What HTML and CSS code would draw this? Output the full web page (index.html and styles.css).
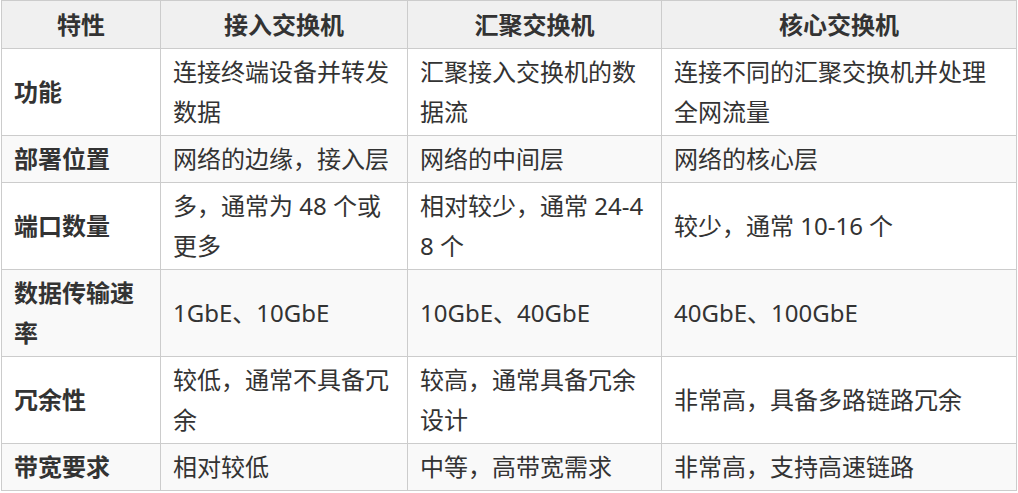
FILE: index.html
```html
<!DOCTYPE html>
<html lang="zh-CN">
<head>
<meta charset="utf-8">
<title>交换机对比</title>
<link rel="stylesheet" href="styles.css">
</head>
<body>
<table class="cmp">
  <colgroup>
    <col class="c1"><col class="c2"><col class="c3"><col class="c4">
  </colgroup>
  <thead>
    <tr><th>特性</th><th>接入交换机</th><th>汇聚交换机</th><th>核心交换机</th></tr>
  </thead>
  <tbody>
    <tr><td class="k">功能</td><td>连接终端设备并转发数据</td><td>汇聚接入交换机的数据流</td><td>连接不同的汇聚交换机并处理全网流量</td></tr>
    <tr><td class="k">部署位置</td><td>网络的边缘，接入层</td><td>网络的中间层</td><td>网络的核心层</td></tr>
    <tr><td class="k">端口数量</td><td>多，通常为 48 个或更多</td><td>相对较少，通常 24-48 个</td><td>较少，通常 10-16 个</td></tr>
    <tr><td class="k">数据传输速率</td><td>1GbE、10GbE</td><td>10GbE、40GbE</td><td>40GbE、100GbE</td></tr>
    <tr><td class="k">冗余性</td><td>较低，通常不具备冗余</td><td>较高，通常具备冗余设计</td><td>非常高，具备多路链路冗余</td></tr>
    <tr><td class="k">带宽要求</td><td>相对较低</td><td>中等，高带宽需求</td><td>非常高，支持高速链路</td></tr>
  </tbody>
</table>
</body>
</html>
```

FILE: styles.css
```css
html, body {
  margin: 0;
  padding: 0;
  background: #ffffff;
}
body {
  padding-left: 1px;
}
.cmp {
  border-collapse: collapse;
  table-layout: fixed;
  width: 1015px;
  font-family: "Noto Sans", "Noto Sans CJK SC", sans-serif;
  font-size: 24px;
  line-height: 40px;
  color: #333333;
  word-break: break-all;
}
.c1 { width: 159px; }
.c2 { width: 247px; }
.c3 { width: 254px; }
.c4 { width: 355px; }
.cmp th,
.cmp td {
  border: 1px solid #cccccc;
  padding: 3px 12px;
  text-align: left;
  vertical-align: middle;
}
.cmp th {
  background: #f0f0f0;
  font-weight: 700;
  text-align: center;
  padding-top: 4px;
}
.cmp td.k {
  font-weight: 700;
}
.cmp tbody tr:nth-child(even) td {
  background: #f9f9f9;
}
```
